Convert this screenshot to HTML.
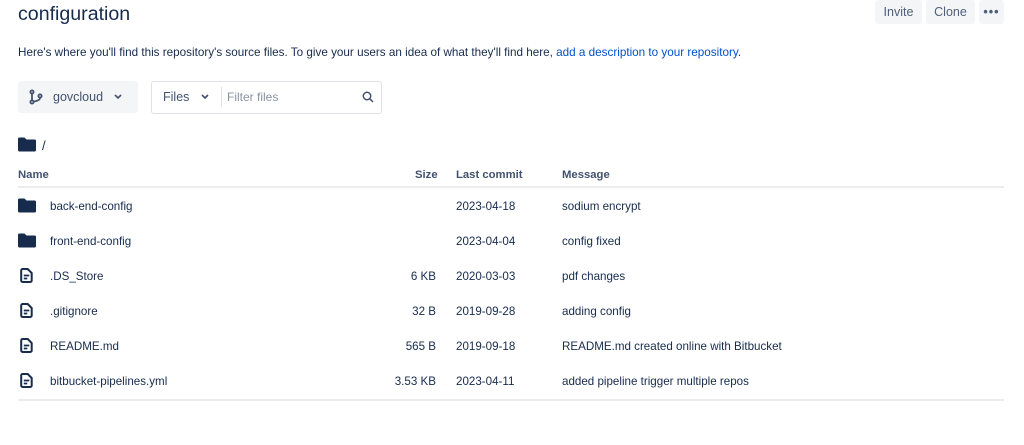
<!DOCTYPE html>
<html><head><style>
body{margin:0;width:1024px;height:445px;background:#fff;font-family:"Liberation Sans",sans-serif;color:#172b4d;position:relative;overflow:hidden}
.a{position:absolute;white-space:nowrap}
.btn{position:absolute;top:0;height:24px;background:#f4f5f7;border-radius:3px;font-size:12.5px;color:#505f79;line-height:24px;text-align:center}
.row{position:absolute;left:18px;width:986px;height:35px;font-size:11.6px;color:#172b4d}
.row span{position:absolute;top:1px;line-height:35px}
.ic{position:absolute;left:2px;top:10px}
</style></head><body>
<div class="a" style="left:18px;top:0;font-size:19.6px;line-height:28px;color:#172b4d">configuration</div>
<div class="btn" style="left:875px;width:47px">Invite</div>
<div class="btn" style="left:926px;width:49px">Clone</div>
<div class="btn" style="left:979px;width:25px;font-weight:bold;letter-spacing:1px">•••</div>
<div class="a" style="left:18px;top:46px;font-size:11.7px;color:#172b4d">Here's where you'll find this repository's source files. To give your users an idea of what they'll find here, <span style="color:#0052cc">add a description to your repository</span>.</div>
<div class="a" style="left:18px;top:81px;width:120px;height:32px;background:#f4f5f7;border-radius:3px"></div>
<svg class="a" style="left:29px;top:89px" width="14" height="16" viewBox="0 0 14 16"><g fill="none" stroke="#42526e" stroke-width="1.8"><circle cx="3" cy="3" r="1.6"/><circle cx="3" cy="13" r="1.6"/><circle cx="11" cy="7" r="1.6"/><path d="M3 5v6M11 9c0 2-3 3-6 3.5"/></g></svg>
<div class="a" style="left:53px;top:90px;font-size:12.5px;color:#42526e">govcloud</div>
<svg class="a" style="left:114px;top:94px" width="8" height="6" viewBox="0 0 8 6"><path d="M1 1l3 3 3-3" fill="none" stroke="#42526e" stroke-width="1.6"/></svg>
<div class="a" style="left:151px;top:81px;width:229px;height:31px;border:1px solid #dfe1e6;border-radius:3px;background:#fff"></div>
<div class="a" style="left:163px;top:90px;font-size:12.5px;color:#42526e">Files</div>
<svg class="a" style="left:201px;top:94px" width="8" height="6" viewBox="0 0 8 6"><path d="M1 1l3 3 3-3" fill="none" stroke="#42526e" stroke-width="1.6"/></svg>
<div class="a" style="left:221px;top:87px;width:1px;height:20px;background:#dfe1e6"></div>
<div class="a" style="left:227px;top:90px;font-size:12px;color:#8993a4">Filter files</div>
<svg class="a" style="left:362px;top:91px" width="12" height="12" viewBox="0 0 12 12"><circle cx="5" cy="5" r="3.7" fill="none" stroke="#42526e" stroke-width="1.5"/><path d="M7.8 7.8L11 11" stroke="#42526e" stroke-width="1.5"/></svg>
<svg class="a" style="left:18px;top:137px" width="18" height="15" viewBox="0 0 18 15"><path d="M0 2a1.5 1.5 0 011.5-1.5h5l2 2h8a1.5 1.5 0 011.5 1.5v9a1.5 1.5 0 01-1.5 1.5h-15A1.5 1.5 0 010 13z" fill="#172b4d"/></svg>
<div class="a" style="left:42px;top:138px;font-size:13px">/</div>
<div class="a" style="left:18px;top:169px;font-size:11.3px;font-weight:bold;color:#42526e">Name</div>
<div class="a" style="left:415px;top:169px;font-size:11.3px;font-weight:bold;color:#42526e">Size</div>
<div class="a" style="left:456px;top:169px;font-size:11.3px;font-weight:bold;color:#42526e">Last commit</div>
<div class="a" style="left:562px;top:169px;font-size:11.3px;font-weight:bold;color:#42526e">Message</div>
<div class="a" style="left:18px;top:186px;width:986px;height:2px;background:#ebecf0"></div>

<div class="row" style="top:188px"><svg class="ic" style="left:0;top:10px" width="18" height="15" viewBox="0 0 18 15"><path d="M0 2a1.5 1.5 0 011.5-1.5h5l2 2h8a1.5 1.5 0 011.5 1.5v9a1.5 1.5 0 01-1.5 1.5h-15A1.5 1.5 0 010 13z" fill="#172b4d"/></svg><span style="left:32px">back-end-config</span><span style="left:438px">2023-04-18</span><span style="left:544px">sodium encrypt</span></div>
<div class="row" style="top:223px"><svg class="ic" style="left:0;top:10px" width="18" height="15" viewBox="0 0 18 15"><path d="M0 2a1.5 1.5 0 011.5-1.5h5l2 2h8a1.5 1.5 0 011.5 1.5v9a1.5 1.5 0 01-1.5 1.5h-15A1.5 1.5 0 010 13z" fill="#172b4d"/></svg><span style="left:32px">front-end-config</span><span style="left:438px">2023-04-04</span><span style="left:544px">config fixed</span></div>
<div class="row" style="top:258px"><svg class="ic" width="13" height="15" viewBox="0 0 13 15"><path d="M1.2 2.5A1.5 1.5 0 012.7 1h5l4 4v7.5a1.5 1.5 0 01-1.5 1.5h-7.5a1.5 1.5 0 01-1.5-1.5z" fill="none" stroke="#172b4d" stroke-width="2"/><path d="M3.8 7.5h5.5M3.8 10.5h3.5" stroke="#172b4d" stroke-width="1.8"/></svg><span style="left:32px">.DS_Store</span><span style="right:568px">6 KB</span><span style="left:438px">2020-03-03</span><span style="left:544px">pdf changes</span></div>
<div class="row" style="top:293px"><svg class="ic" width="13" height="15" viewBox="0 0 13 15"><path d="M1.2 2.5A1.5 1.5 0 012.7 1h5l4 4v7.5a1.5 1.5 0 01-1.5 1.5h-7.5a1.5 1.5 0 01-1.5-1.5z" fill="none" stroke="#172b4d" stroke-width="2"/><path d="M3.8 7.5h5.5M3.8 10.5h3.5" stroke="#172b4d" stroke-width="1.8"/></svg><span style="left:32px">.gitignore</span><span style="right:568px">32 B</span><span style="left:438px">2019-09-28</span><span style="left:544px">adding config</span></div>
<div class="row" style="top:328px"><svg class="ic" width="13" height="15" viewBox="0 0 13 15"><path d="M1.2 2.5A1.5 1.5 0 012.7 1h5l4 4v7.5a1.5 1.5 0 01-1.5 1.5h-7.5a1.5 1.5 0 01-1.5-1.5z" fill="none" stroke="#172b4d" stroke-width="2"/><path d="M3.8 7.5h5.5M3.8 10.5h3.5" stroke="#172b4d" stroke-width="1.8"/></svg><span style="left:32px">README.md</span><span style="right:568px">565 B</span><span style="left:438px">2019-09-18</span><span style="left:544px">README.md created online with Bitbucket</span></div>
<div class="row" style="top:363px"><svg class="ic" width="13" height="15" viewBox="0 0 13 15"><path d="M1.2 2.5A1.5 1.5 0 012.7 1h5l4 4v7.5a1.5 1.5 0 01-1.5 1.5h-7.5a1.5 1.5 0 01-1.5-1.5z" fill="none" stroke="#172b4d" stroke-width="2"/><path d="M3.8 7.5h5.5M3.8 10.5h3.5" stroke="#172b4d" stroke-width="1.8"/></svg><span style="left:32px">bitbucket-pipelines.yml</span><span style="right:568px">3.53 KB</span><span style="left:438px">2023-04-11</span><span style="left:544px">added pipeline trigger multiple repos</span></div>
<div class="a" style="left:18px;top:399px;width:986px;height:2px;background:#ebecf0"></div>
</body></html>
